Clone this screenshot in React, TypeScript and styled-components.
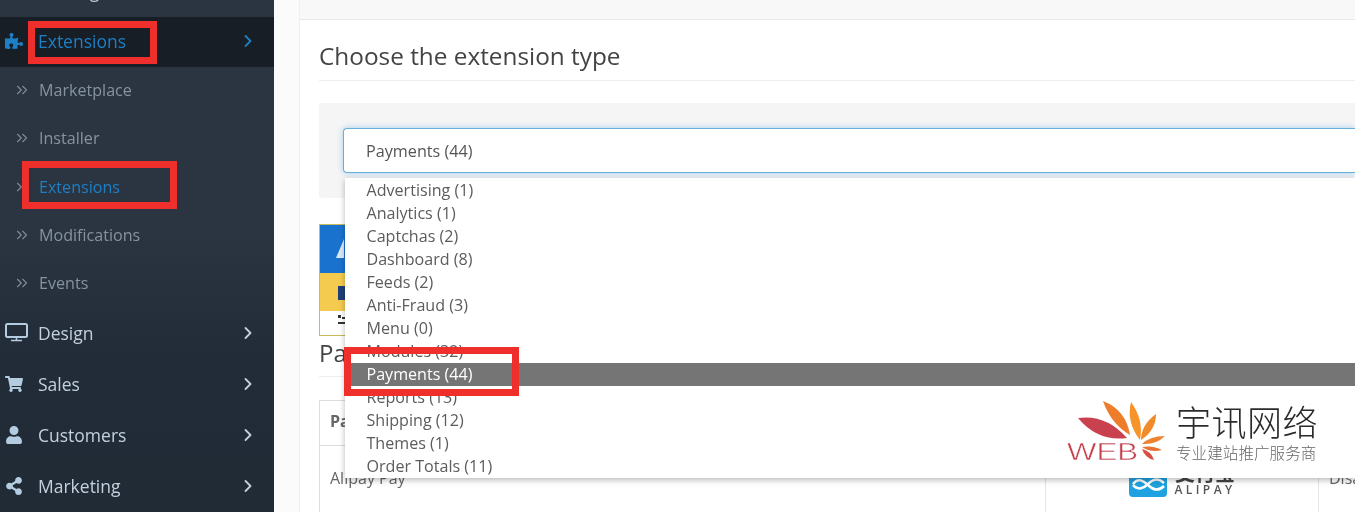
import React from 'react';
import styled, { createGlobalStyle } from 'styled-components';
import { FaShoppingCart, FaUser, FaShareAlt, FaPuzzlePiece } from 'react-icons/fa';
import { ChevronRight, ChevronsRight } from 'lucide-react';

const Global = createGlobalStyle`
  html, body { margin: 0; padding: 0; height: 512px; overflow: hidden; background: #fbfbfb; }
  * { box-sizing: border-box; }
  #root { font-family: "Open Sans", "Liberation Sans", sans-serif; }
`;

const Page = styled.div`
  position: relative;
  display: flex;
  width: 1355px;
  height: 512px;
  overflow: hidden;
  filter: blur(0.35px);
`;
const Sidebar = styled.nav`
  width: 274px;
  flex: none;
  height: 512px;
  overflow: hidden;
  background: linear-gradient(180deg, #2b3542 0%, #2b3542 45%, #222c38 70%, #212b36 100%);
`;
const Menu = styled.ul`
  list-style: none;
  margin: -34px 0 0;
  padding: 0;
`;
const TopRow = styled.li<{ $active?: boolean }>`
  display: flex;
  align-items: center;
  height: ${p => (p.$active ? 50 : 51)}px;
  padding: 0 16px 2px 5px;
  font-size: 17.5px;
  color: ${p => (p.$active ? '#1d7fc4' : '#c3d1de')};
  background: ${p => (p.$active ? '#181e26' : 'transparent')};
`;
const IconBox = styled.span<{ $active?: boolean }>`
  width: 33px;
  flex: none;
  display: flex;
  align-items: center;
  font-size: 18px;
  color: ${p => (p.$active ? '#1d7fc4' : '#b4cce0')};
`;
const TopLabel = styled.span`
  flex: 1;
`;
const SubMenu = styled.ul`
  list-style: none;
  margin: 0;
  padding: 0;
`;
const SubRow = styled.li<{ $active?: boolean }>`
  display: flex;
  align-items: center;
  height: 48.25px;
  padding: 0 0 2px 13px;
  font-size: 16.1px;
  color: ${p => (p.$active ? '#1d7fc4' : '#86939f')};
`;
const SubIcon = styled.span`
  width: 26px;
  flex: none;
  display: flex;
  align-items: center;
  color: #7f8c99;
`;

const Main = styled.main`
  position: relative;
  flex: 1;
  min-width: 0;
  height: 512px;
  padding-left: 25px;
`;
const Panel = styled.section`
  height: 512px;
  background: #fff;
  border-left: 1px solid #f0f0f0;
  overflow: hidden;
`;
const PanelHead = styled.div`
  height: 20px;
  background: #f8f8f8;
  border-bottom: 1px solid #e8e8e8;
`;
const PanelBody = styled.div`
  padding-left: 19px;
`;
const Title = styled.h3`
  margin: 0;
  height: 61px;
  padding-top: 17px;
  font-size: 24.35px;
  line-height: 38px;
  font-weight: 400;
  color: #444;
  border-bottom: 1px solid #eee;
`;
const Well = styled.div`
  margin-top: 22px;
  height: 95px;
  padding: 25px 0 0 24px;
  background: #f5f5f5;
  border-radius: 3px 0 0 3px;
`;
const SelectBox = styled.div`
  height: 45px;
  padding-left: 22px;
  display: flex;
  align-items: center;
  font-size: 16.2px;
  color: #555;
  background: #fff;
  border: 1px solid #66afd9;
  border-right: 0;
  border-radius: 4px 0 0 4px;
  box-shadow: 0 0 6px rgba(102, 175, 233, 0.55);
`;
const Banner = styled.svg`
  display: block;
  margin-top: 26px;
  width: 120px;
  height: 112px;
`;
const SectionTitle = styled.h3`
  margin: 0;
  height: 41px;
  font-size: 24px;
  line-height: 34px;
  font-weight: 400;
  color: #444;
  border-bottom: 1px solid #eee;
`;
const DataTable = styled.div`
  margin-top: 23px;
  border: 1px solid #ddd;
  border-right: 0;
`;
const TableRow = styled.div<{ $head?: boolean }>`
  display: grid;
  grid-template-columns: 725px 273px 100px;
  height: ${p => (p.$head ? 45 : 67)}px;
  border-bottom: ${p => (p.$head ? '1px solid #ddd' : '0')};
  font-size: 16px;
  color: #666;
  font-weight: ${p => (p.$head ? 700 : 400)};
`;
const Cell = styled.div<{ $center?: boolean }>`
  display: flex;
  align-items: center;
  justify-content: ${p => (p.$center ? 'center' : 'flex-start')};
  padding: ${p => (p.$center ? '0' : '0 0 4px 10px')};
  border-left: 1px solid #e4e4e4;
  &:first-child { border-left: 0; }
`;
const AlipayMark = styled.div`
  display: flex;
  align-items: flex-end;
  gap: 8px;
  padding-top: 7px;
`;
const AlipayStack = styled.div`
  display: flex;
  flex-direction: column;
  align-items: center;
  margin-top: -10px;
`;
const AlipayCn = styled.span`
  font-family: "Noto Sans CJK SC", sans-serif;
  font-size: 20px;
  line-height: 20px;
  font-weight: 700;
  color: #444;
`;
const AlipayWord = styled.span`
  font-size: 12px;
  line-height: 14px;
  font-weight: 600;
  letter-spacing: 3.4px;
  color: #555;
`;

const Dropdown = styled.ul`
  position: absolute;
  left: 71px;
  right: 0;
  top: 178px;
  height: 300px;
  margin: 0;
  padding: 1px 0 0;
  list-style: none;
  background: #fff;
  box-shadow: 0 2px 6px rgba(0, 0, 0, 0.28);
`;
const Option = styled.li<{ $selected?: boolean }>`
  height: 23px;
  line-height: 23px;
  padding-left: 21.5px;
  font-size: 16.1px;
  color: ${p => (p.$selected ? '#fff' : '#5c5c5c')};
  background: ${p => (p.$selected ? '#757575' : 'transparent')};
`;
const Watermark = styled.div`
  position: absolute;
  right: 0;
  top: 386px;
  width: 315px;
  height: 92px;
  padding: 14px 0 0 26px;
  display: flex;
  background: #fff;
`;
const LogoText = styled.div`
  display: flex;
  flex-direction: column;
  padding-top: 1px;
`;
const BrandName = styled.div`
  font-family: "Noto Sans CJK SC", sans-serif;
  font-size: 35px;
  line-height: 40px;
  font-weight: 300;
  letter-spacing: 0.5px;
  color: #2b2b2b;
`;
const BrandTag = styled.div`
  font-family: "Noto Sans CJK SC", sans-serif;
  font-size: 15.5px;
  line-height: 20px;
  margin-top: 1px;
  font-weight: 300;
  letter-spacing: 0.1px;
  color: #666;
  white-space: nowrap;
`;
const Callout = styled.div<{ $x: number; $y: number; $w: number; $h: number }>`
  position: absolute;
  left: ${p => p.$x}px;
  top: ${p => p.$y}px;
  width: ${p => p.$w}px;
  height: ${p => p.$h}px;
  border: 7px solid #ee2f2c;
  pointer-events: none;
`;

const Desktop = () => (
  <svg width="23" height="19" viewBox="0 0 23 19" fill="none">
    <rect x="1" y="1" width="21" height="13" rx="1.5" stroke="currentColor" strokeWidth="2" />
    <path d="M11.5 14v3M6 17.5h11" stroke="currentColor" strokeWidth="1.6" />
  </svg>
);

const Logo = () => (
  <svg width="110" height="70" viewBox="0 0 110 70">
    <path d="M12 18Q40 14 61 38Q32 42 12 18Z" fill="#c9404f" />
    <path d="M37 1Q60 10 64 35Q45 24 37 1Z" fill="#ed7d2a" />
    <path d="M65 2Q78 20 74 40Q60 22 65 2Z" fill="#f6932a" />
    <path d="M90 14Q90 30 75 40Q75 25 90 14Z" fill="#f08a2a" />
    <path d="M99 36Q90 45 76 44Q84 36 99 36Z" fill="#ee8230" />
    <path d="M96 50Q85 53 76 47Q87 45 96 50Z" fill="#ea7134" />
    <path d="M88 60Q79 58 76 49Q85 51 88 60Z" fill="#d94f42" />
    <text x="1" y="60" fontFamily="Liberation Sans, sans-serif" fontSize="24" textLength="71" lengthAdjust="spacingAndGlyphs" fill="#c5414f" stroke="#fff" strokeWidth="0.5">WEB</text>
  </svg>
);

const options = ['Advertising (1)', 'Analytics (1)', 'Captchas (2)', 'Dashboard (8)', 'Feeds (2)', 'Anti-Fraud (3)', 'Menu (0)', 'Modules (32)', 'Payments (44)', 'Reports (13)', 'Shipping (12)', 'Themes (1)', 'Order Totals (11)'];
const subItems = ['Marketplace', 'Installer', 'Extensions', 'Modifications', 'Events'];
const lowerItems: [string, React.ReactNode][] = [
  ['Design', <Desktop />],
  ['Sales', <FaShoppingCart />],
  ['Customers', <FaUser />],
  ['Marketing', <FaShareAlt />],
];

export default function App() {
  return (
    <Page>
      <Global />
      <Sidebar>
        <Menu>
          <TopRow><IconBox /><TopLabel>Catalog</TopLabel></TopRow>
          <TopRow $active>
            <IconBox $active><FaPuzzlePiece /></IconBox>
            <TopLabel>Extensions</TopLabel>
            <ChevronRight size={20} strokeWidth={2.2} />
          </TopRow>
          <SubMenu>
            {subItems.map(s => (
              <SubRow key={s} $active={s === 'Extensions'}>
                <SubIcon><ChevronsRight size={18} strokeWidth={1.5} /></SubIcon>
                {s}
              </SubRow>
            ))}
          </SubMenu>
          {lowerItems.map(([label, icon]) => (
            <TopRow key={label}>
              <IconBox>{icon}</IconBox>
              <TopLabel>{label}</TopLabel>
              <ChevronRight size={20} strokeWidth={2.2} />
            </TopRow>
          ))}
        </Menu>
      </Sidebar>
      <Main>
        <Panel>
          <PanelHead />
          <PanelBody>
            <Title>Choose the extension type</Title>
            <Well><SelectBox>Payments (44)</SelectBox></Well>
            <Banner viewBox="0 0 120 112">
              <rect x="0.5" y="0.5" width="119" height="111" fill="#fff" stroke="#c9b95a" />
              <rect x="1" y="1" width="118" height="48" fill="#1a72cf" />
              <rect x="1" y="49" width="118" height="38" fill="#f5cb4f" />
              <path d="M17 34L25 15v19z" fill="#dbe9f7" />
              <rect x="19" y="62" width="7" height="14" fill="#1d3f7a" />
              <rect x="19" y="91" width="3" height="3" fill="#333" />
              <rect x="23" y="93" width="3" height="2" fill="#333" />
              <rect x="19" y="98" width="7" height="2" fill="#333" />
            </Banner>
            <SectionTitle>Payment</SectionTitle>
            <DataTable>
              <TableRow $head><Cell>Payment Method</Cell><Cell /><Cell>Status</Cell></TableRow>
              <TableRow>
                <Cell>Alipay Pay</Cell>
                <Cell $center>
                  <AlipayMark>
                    <svg width="38" height="28" viewBox="0 0 38 28">
                      <rect width="38" height="28" rx="4" fill="#1fa3e0" />
                      <path d="M4 15c5-7 11-3 15 1s10 7 16 1M4 16c5 6 11 3 15-1s10-7 16-1" fill="none" stroke="#fff" strokeWidth="2.5" />
                    </svg>
                    <AlipayStack>
                      <AlipayCn>支付宝</AlipayCn>
                      <AlipayWord>ALIPAY</AlipayWord>
                    </AlipayStack>
                  </AlipayMark>
                </Cell>
                <Cell>Disabled</Cell>
              </TableRow>
            </DataTable>
          </PanelBody>
        </Panel>
        <Dropdown>
          {options.map(o => (
            <Option key={o} $selected={o === 'Payments (44)'}>{o}</Option>
          ))}
        </Dropdown>
      </Main>
      <Watermark>
        <Logo />
        <LogoText>
          <BrandName>宇讯网络</BrandName>
          <BrandTag>专业建站推广服务商</BrandTag>
        </LogoText>
      </Watermark>
      <Callout $x={28} $y={21} $w={129} $h={43} />
      <Callout $x={22} $y={161} $w={155} $h={48} />
      <Callout $x={344} $y={347} $w={175} $h={49} />
    </Page>
  );
}
